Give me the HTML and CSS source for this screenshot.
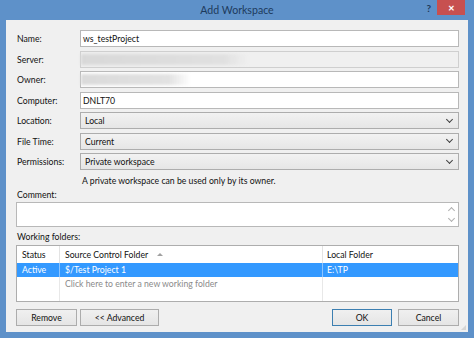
FILE: index.html
```html
<!DOCTYPE html>
<html lang="en">
<head>
    <meta charset="UTF-8">
    <title>Add Workspace</title>
    <link rel="stylesheet" href="styles.css">
</head>
<body>
    <div class="window">
        <div class="title-bar">
            <span class="title">Add Workspace</span>
            <span class="help">?</span>
            <span class="close">&#x2715;</span>
        </div>
        <div class="client">
            <div class="fields">
                <label>Name:</label>
                <div class="input">ws_testProject</div>
                <label>Server:</label>
                <div class="input disabled"><span class="blur wide"></span></div>
                <label>Owner:</label>
                <div class="input"><span class="blur"></span></div>
                <label>Computer:</label>
                <div class="input">DNLT70</div>
                <label>Location:</label>
                <div class="select">Local<span class="chev"></span></div>
                <label>File Time:</label>
                <div class="select">Current<span class="chev"></span></div>
                <label>Permissions:</label>
                <div class="select">Private workspace<span class="chev"></span></div>
            </div>
            <div class="hint">A private workspace can be used only by its owner.</div>

            <div class="caption">Comment:</div>
            <div class="comment">
                <div class="scroll">
                    <span class="arrow up"></span>
                    <span class="arrow down"></span>
                </div>
            </div>

            <div class="caption">Working folders:</div>
            <div class="grid">
                <div class="row head">
                    <div class="cell c1">Status</div>
                    <div class="cell c2">Source Control Folder <span class="sort"></span></div>
                    <div class="cell c3">Local Folder</div>
                </div>
                <div class="row selected">
                    <div class="cell c1">Active</div>
                    <div class="cell c2">$/Test Project 1</div>
                    <div class="cell c3">E:\TP</div>
                </div>
                <div class="row">
                    <div class="cell c1"></div>
                    <div class="cell c2 placeholder">Click here to enter a new working folder</div>
                    <div class="cell c3"></div>
                </div>
                <div class="row filler">
                    <div class="cell c1"></div>
                    <div class="cell c2"></div>
                    <div class="cell c3"></div>
                </div>
            </div>

            <div class="buttons">
                <button class="remove">Remove</button>
                <button class="advanced">&lt;&lt; Advanced</button>
                <span class="spacer"></span>
                <button class="ok">OK</button>
                <button class="cancel">Cancel</button>
            </div>
            <span class="grip"></span>
        </div>
    </div>
</body>
</html>
```

FILE: styles.css
```css
body {
    margin: 0;
    font-family: Lato, "Open Sans", sans-serif;
    font-size: 8.7px;
    color: #111;
}

.window {
    width: 474px;
    height: 338px;
    background-color: #5e91c9;
    padding: 0 6px 6px 6px;
    box-sizing: border-box;
    display: flex;
    flex-direction: column;
}

.title-bar {
    height: 20px;
    position: relative;
    display: flex;
    justify-content: center;
    align-items: center;
}

.title {
    font-size: 10.6px;
    color: #1d3a5c;
    margin-top: -1px;
}

.help {
    position: absolute;
    right: 37px;
    top: 2px;
    font-size: 10px;
    font-weight: bold;
    color: #1d3a5c;
}

.close {
    position: absolute;
    right: 3px;
    top: 0;
    width: 28px;
    height: 15px;
    background-color: #c75050;
    color: white;
    font-size: 8px;
    font-weight: bold;
    display: flex;
    justify-content: center;
    align-items: center;
}

.client {
    flex: 1;
    background-color: #f0f0f0;
    padding: 10px 9px 0 10px;
    position: relative;
    display: flex;
    flex-direction: column;
}

.fields {
    display: grid;
    grid-template-columns: 64px 1fr;
    row-gap: 3.5px;
}

.fields label {
    padding-left: 1px;
    line-height: 17px;
}

.input, .select {
    height: 17px;
    box-sizing: border-box;
    border: 1px solid #b8b8b8;
    background-color: white;
    padding-left: 2px;
    line-height: 15px;
    display: flex;
    align-items: center;
}

.input.disabled {
    background-color: #f0f0f0;
    border-color: #cfcfcf;
}

.blur {
    display: block;
    width: 110px;
    height: 11px;
    margin-left: -2px;
    background: linear-gradient(90deg, #dadada, #e2e2e2 80%, rgba(230, 230, 230, 0));
    filter: blur(1.5px);
}

.blur.wide {
    width: 168px;
    background: linear-gradient(90deg, #d8d8d8, #e0e0e0 85%, rgba(234, 234, 234, 0));
}

.select {
    background: linear-gradient(#f2f2f2, #e6e6e6);
    border-color: #adadad;
    padding-left: 4px;
    justify-content: space-between;
}

.chev {
    width: 4px;
    height: 4px;
    border-right: 1.5px solid #404040;
    border-bottom: 1.5px solid #404040;
    transform: rotate(45deg);
    margin: -3px 6px 0 0;
}

.hint {
    padding-left: 66px;
    margin-top: 4px;
    line-height: 14px;
}

.caption {
    padding-left: 1px;
    line-height: 14px;
}

.comment {
    height: 25px;
    box-sizing: border-box;
    border: 1px solid #b8b8b8;
    background-color: white;
    margin: 0 0 3px 0;
    display: flex;
    justify-content: flex-end;
}

.scroll {
    width: 14px;
    display: flex;
    flex-direction: column;
    justify-content: space-around;
    align-items: center;
    padding: 2px 0;
}

.arrow {
    width: 4px;
    height: 4px;
    border-left: 1px solid #b0b0b0;
    border-top: 1px solid #b0b0b0;
}

.arrow.up {
    transform: rotate(45deg);
    margin-top: 2px;
}

.arrow.down {
    transform: rotate(225deg);
    margin-bottom: 2px;
}

.grid {
    height: 57px;
    box-sizing: border-box;
    border: 1px solid #adadad;
    background-color: white;
    margin-top: 1px;
    display: flex;
    flex-direction: column;
}

.row {
    display: flex;
    height: 14px;
    line-height: 14px;
}

.row.head {
    height: 17px;
    line-height: 17px;
}

.row.filler {
    flex: 1;
}

.cell {
    box-sizing: border-box;
    padding-left: 5px;
    border-right: 1px solid #e8e8e8;
    white-space: nowrap;
}

.c1 {
    width: 43px;
}

.c2 {
    width: 263px;
}

.c3 {
    flex: 1;
    border-right: none;
    padding-left: 4px;
}

.row.head .cell {
    border-right-color: #e3e3e3;
}

.sort {
    display: inline-block;
    width: 0;
    height: 0;
    border-left: 3px solid transparent;
    border-right: 3px solid transparent;
    border-bottom: 3px solid #a0a0a0;
    margin-left: 7px;
    vertical-align: 2px;
}

.row.selected {
    background-color: #3399ff;
    color: white;
}

.row.selected .cell {
    border-right-color: #8cc4ff;
}

.placeholder {
    color: #8a8a8a;
}

.buttons {
    display: flex;
    gap: 3px;
    margin-top: 7px;
}

.spacer {
    flex: 1;
}

button {
    height: 17px;
    box-sizing: border-box;
    border: 1px solid #acacac;
    background: linear-gradient(#f0f0f0, #e5e5e5);
    font-family: inherit;
    font-size: 8.7px;
    color: #111;
    padding: 0;
}

.remove {
    width: 61px;
}

.advanced {
    width: 79px;
}

.ok {
    width: 60px;
    border-color: #3c7fb1;
    margin-right: 3px;
}

.cancel {
    width: 61px;
}

.grip {
    position: absolute;
    right: 2px;
    bottom: 2px;
    width: 5px;
    height: 5px;
    background: radial-gradient(circle, #b5b5b5 0.6px, transparent 0.8px) 0 0 / 2px 2px;
    clip-path: polygon(100% 0, 100% 100%, 0 100%);
}
```
